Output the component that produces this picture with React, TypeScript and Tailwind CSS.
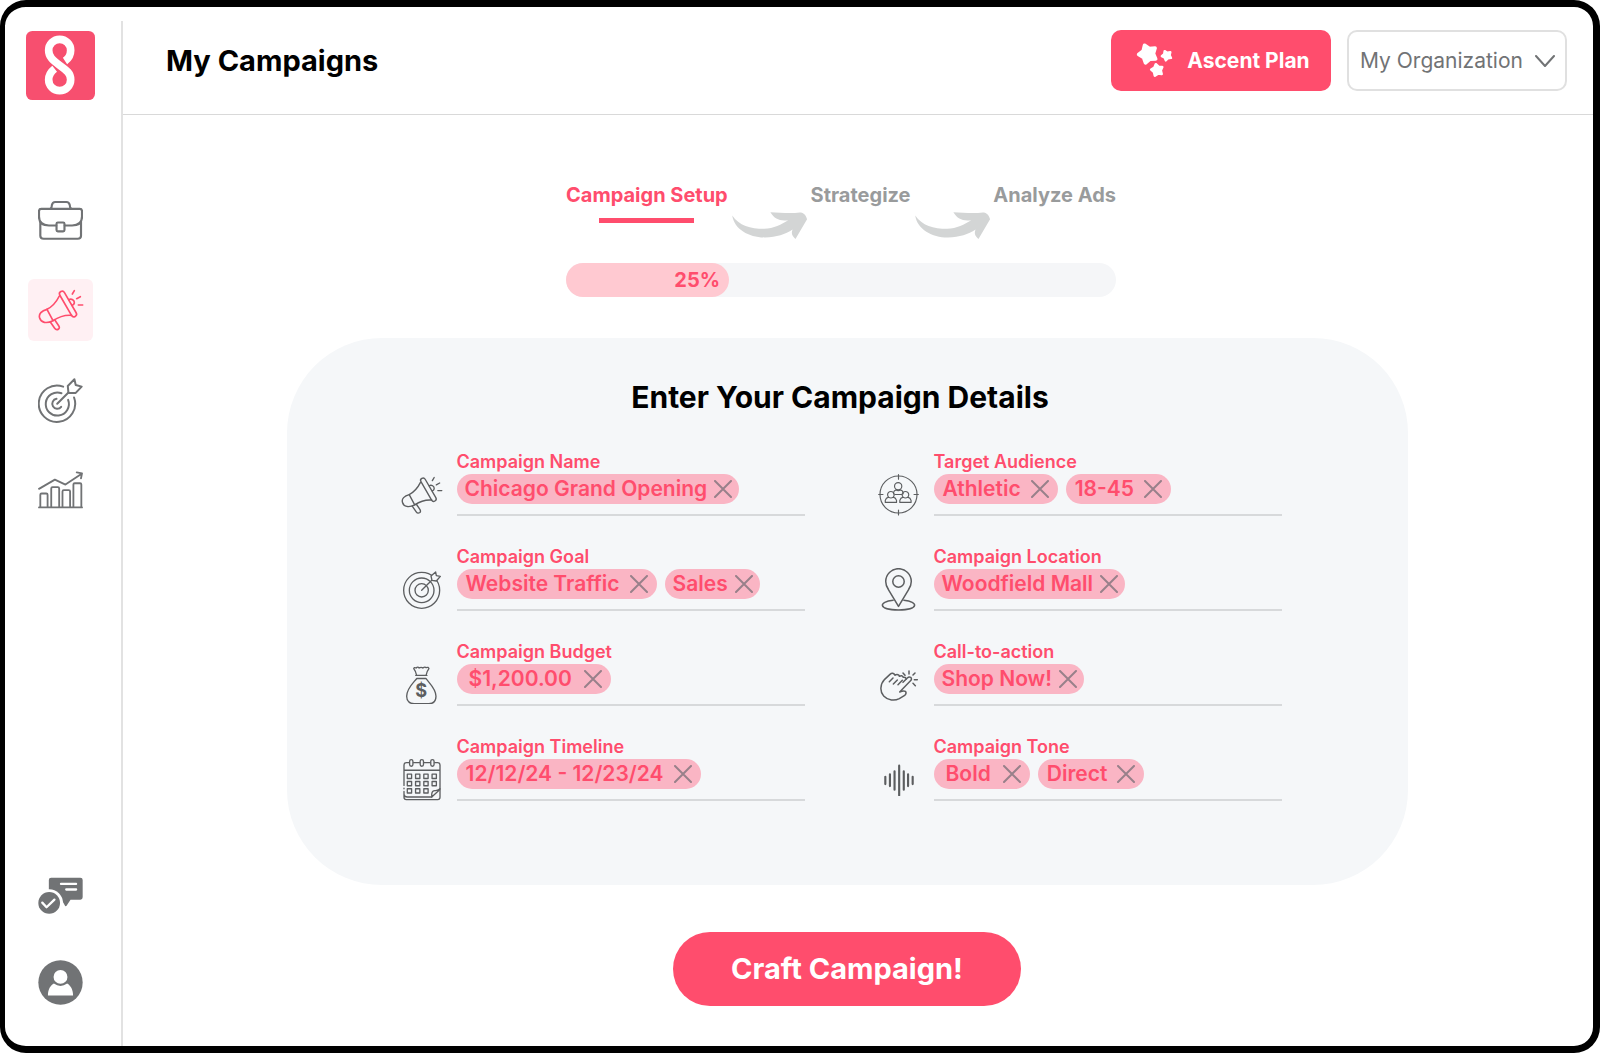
import { useState } from "react";

const PINK = "#ff4d6d";
const GRAY = "#717375";
const DARK = "#5c5e60";

const star = (cx: number, cy: number, r: number, rot: number) =>
  Array.from({ length: 10 }, (_, i) => {
    const a = ((rot + i * 36) * Math.PI) / 180;
    const len = i % 2 === 0 ? r : r * 0.6;
    return `${(cx + len * Math.cos(a)).toFixed(1)},${(cy + len * Math.sin(a)).toFixed(1)}`;
  }).join(" ");

const line = (color: string, width: number) => ({
  fill: "none",
  stroke: color,
  strokeWidth: width,
  strokeLinecap: "round" as const,
  strokeLinejoin: "round" as const,
});

const Logo = () => (
  <svg viewBox="79 93 207 207" className="size-[69px]" aria-hidden="true">
    <rect x="79" y="93" width="207" height="207" rx="19" fill="#f74f6f" />
    <path
      d="M196 183C208 175 213 165 213 151A33 33 0 0 0 147 151C147 170 158 180 180 196C202 212 213 220 213 239A33 33 0 0 1 147 239C147 225 152 216 165 206"
      fill="none"
      stroke="#fff"
      strokeWidth="23"
    />
  </svg>
);

const Briefcase = () => (
  <svg viewBox="114 600 136 122" className="w-[45px]" aria-hidden="true" {...line(GRAY, 6.5)}>
    <path d="M169 677H147Q117 677 117 650V634Q117 627 124 627H240Q247 627 247 634V650Q247 677 217 677H195" />
    <path d="M121 666V708Q121 717 131 717H234Q244 717 244 708V666" />
    <rect x="170" y="668" width="24" height="27" rx="4" />
    <path d="M152 626Q156 623 156 615Q158 606 166 606H200Q208 606 210 615Q210 623 214 626" />
  </svg>
);

const Megaphone = ({ color, width, className }: { color: string; width: number; className: string }) => (
  <svg viewBox="113 85 138 126" className={className} aria-hidden="true" {...line(color, width)}>
    <rect x="-43" y="-8" width="86" height="16" rx="8" transform="translate(203 130) rotate(60)" />
    <path d="M177 106C168 124 156 138 140 146L158 180C176 168 192 162 214 164" />
    <path d="M140 146C124 150 114 160 118 172C122 186 138 190 158 180" />
    <path d="M150 184L163 203Q168 210 175 205Q179 201 175 195L163 177" />
    <path d="M206 117C213 112 223 119 222 127Q221 132 216 134" />
    <path d="M216 100L222 90M229 114L240 108M234 133H247" />
  </svg>
);

const TargetOpen = () => (
  <svg viewBox="114 354 136 136" className="w-[45px]" aria-hidden="true" {...line(GRAY, 6)}>
    <path d="M190 380A55 55 0 1 0 223 413" />
    <path d="M185 400A35 35 0 1 0 205 420" />
    <path d="M170 417A15 15 0 1 0 184 441" />
    <path d="M172 432L206 398" />
    <path d="M206 399L204 378L224 358L228 375L246 380L228 399Z" />
  </svg>
);

const Growth = () => (
  <svg viewBox="114 634 136 115" className="w-[45px]" aria-hidden="true" {...line(GRAY, 5.5)}>
    <path d="M117 744H247M117 688L165 660L197 675L246 642M231 638L247 641L244 656" />
    <path d="M121 743V706Q121 702 125 702H139Q143 702 143 706V743M154 743V687Q154 683 158 683H174Q178 683 178 687V743M188 743V696Q188 692 192 692H207Q211 692 211 696V743M221 743V675Q221 671 225 671H241Q245 671 245 675V743" />
  </svg>
);

const ChatCheck = () => (
  <svg viewBox="114 111 137 114" className="w-[45px]" aria-hidden="true">
    <path d="M154 113H243Q250 113 250 120V173Q250 180 243 180H213L202 197Q198 203 195 196L186 180H147V120Q147 113 154 113Z" fill={GRAY} />
    <circle cx="148" cy="190" r="42" fill="#fff" />
    <circle cx="148" cy="190" r="33" fill={GRAY} />
    <path d="M127 189L140 203L164 180M184 132H230M200 149H230" {...line("#fff", 7)} />
  </svg>
);

const User = () => (
  <svg viewBox="114 357 136 136" className="w-[45px]" aria-hidden="true">
    <circle cx="182" cy="425" r="67" fill={GRAY} />
    <circle cx="182" cy="408" r="21" fill="#fff" />
    <path d="M144 464C144 446 152 433 162 428Q182 443 202 428C213 434 220 447 220 464Z" fill="#fff" />
  </svg>
);

const Stars = () => (
  <svg viewBox="170 132 112 106" className="w-[37px]" aria-hidden="true" fill="#fff" stroke="#fff" strokeLinejoin="round">
    <polygon points={star(206, 165, 28, -111)} strokeWidth="11" />
    <polygon points={star(263, 170, 15, -115)} strokeWidth="7" />
    <polygon points={star(234, 214, 18, -103)} strokeWidth="8" />
  </svg>
);

const Target = () => (
  <svg viewBox="68 425 114 115" className="w-[38px]" aria-hidden="true" {...line(DARK, 4)}>
    <circle cx="124" cy="483" r="54" />
    <circle cx="124" cy="483" r="37" />
    <circle cx="124" cy="483" r="20" />
    <path d="M124 483L155 452" />
    <path d="M155 453L152 440L166 428L168 439L180 441L168 455Z" fill="#f5f7f9" />
  </svg>
);

const MoneyBag = () => (
  <svg viewBox="80 110 92 115" className="w-[31px]" aria-hidden="true" {...line(DARK, 4)}>
    <path d="M112 147C100 162 82 177 82 200C82 215 92 222 104 222H148C160 222 169 215 169 200C169 177 150 162 139 147Z" />
    <path d="M109 138H142M111 136Q109 126 103 118Q104 113 110 116Q115 111 119 116Q125 112 130 116Q136 111 140 115Q147 112 148 118Q142 126 140 136" />
    <text x="125" y="203" textAnchor="middle" fontSize="54" fontWeight="700" fill={DARK} stroke="none">
      $
    </text>
  </svg>
);

const Calendar = () => (
  <svg viewBox="61 382 115 126" className="w-[38px]" aria-hidden="true" {...line(DARK, 4)}>
    <path d="M79 393H71Q64 393 64 400V462M64 470V472M64 480V498Q64 505 71 505H166Q173 505 173 498V400Q173 393 166 393H157M93 393H111M125 393H143M64 416H173M64 489Q65 497 74 497H148" />
    {[86, 118, 150].map((x) => (
      <rect key={x} x={x - 5} y="384" width="10" height="20" rx="5" />
    ))}
    {[428, 450, 472].map((y) =>
      [74, 99, 124, 149].map((x) => (y === 472 && x === 149 ? null : <rect key={x + y} x={x} y={y} width="13" height="13" />))
    )}
    <path d="M148 497V488Q149 476 160 478Q170 476 173 472M148 497L172 475" />
  </svg>
);

const Audience = () => (
  <svg viewBox="59 130 124 125" className="w-[41px]" aria-hidden="true" {...line(DARK, 3.5)}>
    <circle cx="121" cy="192" r="56" />
    <path d="M121 132V146M121 239V254M61 192H74M168 192H181" />
    <circle cx="120" cy="167" r="11" />
    <path d="M106 190V186Q107 180 114 178Q120 183 127 178Q134 180 135 186V190M110 192H131" />
    {[98, 142].map((x) => (
      <g key={x} transform={`translate(${x} 0)`}>
        <path d="M-7 200A10 10 0 1 1 7 200Q15 202 17 210V216H-17V210Q-15 202 -7 200Q0 205 7 200" />
      </g>
    ))}
  </svg>
);

const Pin = () => (
  <svg viewBox="68 418 104 128" className="w-[35px]" aria-hidden="true" {...line(DARK, 4.5)}>
    <path d="M120 532L90 482Q82 470 82 458A38 38 0 0 1 158 458Q158 470 150 482Z" />
    <circle cx="120" cy="458" r="17" />
    <path d="M104 514C60 518 58 542 120 543C182 542 180 518 136 514" />
  </svg>
);

const Tap = () => (
  <svg viewBox="64 124 114 93" className="w-[38px]" aria-hidden="true" {...line(DARK, 4.5)}>
    <path d="M92 159L103 148M109 139Q102 130 94 137L78 152C64 167 63 189 75 202C88 216 108 217 122 210L138 200Q145 194 140 188Q135 185 123 190L157 155Q160 150 156 146Q151 143 146 148L133 161" />
    <path d="M109 139Q116 135 121 140L122 143M104 166L116 154M122 143Q130 138 134 146M118 168L131 155M134 146Q141 145 143 151" />
    <path d="M151 127V136M133 133L139 140M169 133L163 139M167 153H176M163 164L170 171" />
  </svg>
);

const Wave = () => (
  <svg viewBox="75 395 91 100" className="w-[30px]" aria-hidden="true" {...line(DARK, 6.5)}>
    <path d="M79 434V456M93 426V462M107 417V473M121 400V490M135 417V473M148 426V462M162 434V456" />
  </svg>
);

const Arrow = () => (
  <svg viewBox="188 52 79 29" className="mt-[29px] h-7 min-w-0 flex-1" aria-hidden="true">
    <path
      d="M189 55.5C191 70 207 78.5 223 78.3C235 78 244 75 251.5 70C250 74 250.5 76 254.5 80L266.5 59.5C265 54 262 52.5 259 52.5C249 54 238 52.5 228.5 52.3C233 59.5 238 61.5 247 60.5C240 65 232 69 222 69.3C208 69.3 196 66 189 55.5Z"
      fill="#d3d5d5"
    />
  </svg>
);

const navItems = [
  { name: "Portfolio", icon: <Briefcase /> },
  { name: "Campaigns", icon: <Megaphone color={PINK} width={5} className="w-[46px]" />, active: true },
  { name: "Targeting", icon: <TargetOpen /> },
  { name: "Analytics", icon: <Growth /> },
];

const accountItems = [
  { name: "Messages", icon: <ChatCheck /> },
  { name: "Profile", icon: <User /> },
];

const compact = "gap-[7px] pl-2 pr-[7px]";
const normal = "gap-[10px] px-[9px]";
const roomy = "gap-3 pl-3 pr-[9px]";

const fields = [
  {
    id: "name",
    label: "Campaign Name",
    icon: <Megaphone color={DARK} width={4.5} className="w-[42px]" />,
    tags: [{ text: "Chicago Grand Opening", space: compact }],
  },
  {
    id: "audience",
    label: "Target Audience",
    icon: <Audience />,
    tags: [
      { text: "Athletic", space: normal },
      { text: "18-45", space: normal },
    ],
  },
  {
    id: "goal",
    label: "Campaign Goal",
    icon: <Target />,
    tags: [
      { text: "Website Traffic", space: normal },
      { text: "Sales", space: compact },
    ],
  },
  { id: "location", label: "Campaign Location", icon: <Pin />, tags: [{ text: "Woodfield Mall", space: compact }] },
  { id: "budget", label: "Campaign Budget", icon: <MoneyBag />, tags: [{ text: "$1,200.00", space: roomy }] },
  { id: "cta", label: "Call-to-action", icon: <Tap />, tags: [{ text: "Shop Now!", space: compact }] },
  { id: "timeline", label: "Campaign Timeline", icon: <Calendar />, tags: [{ text: "12/12/24 - 12/23/24", space: normal }] },
  {
    id: "tone",
    label: "Campaign Tone",
    icon: <Wave />,
    tags: [
      { text: "Bold", space: roomy },
      { text: "Direct", space: normal },
    ],
  },
];

const NavButton = ({ item }: { item: any }) => (
  <button
    type="button"
    aria-label={item.name}
    className={`flex h-[62px] w-[65px] cursor-pointer items-center justify-center rounded-md ${
      item.active ? "bg-[#fff0f3]" : ""
    }`}
  >
    {item.icon}
  </button>
);

const Field = ({ field }: { field: any }) => {
  const [tags, setTags] = useState<any[]>(field.tags);

  return (
    <div className="flex gap-3">
      <div className="mt-6 flex h-[42px] w-[46px] shrink-0 items-center justify-center">{field.icon}</div>
      <div className="min-w-0 flex-1 border-b-2 border-[#d7d9db] pb-[10px]">
        <label htmlFor={field.id} className="block text-[18px] leading-6 font-semibold text-[#ff4d6d]">
          {field.label}
        </label>
        <div className="flex gap-2">
          {tags.map((tag) => (
            <span
              key={tag.text}
              className={`flex h-[30px] shrink-0 items-center rounded-full bg-[#fab5c4] text-[21px] leading-[30px] font-semibold text-[#ff4d6d] ${tag.space}`}
            >
              {tag.text}
              <button
                type="button"
                aria-label={`Remove ${tag.text}`}
                className="cursor-pointer"
                onClick={() => setTags(tags.filter((t) => t !== tag))}
              >
                <svg viewBox="0 0 18 18" className="size-[18px]" {...line("#98808a", 2)}>
                  <path d="M1 1L17 17M17 1L1 17" />
                </svg>
              </button>
            </span>
          ))}
          <input id={field.id} type="text" className="w-0 min-w-0 flex-1 bg-transparent outline-none" />
        </div>
      </div>
    </div>
  );
};

const App = () => {
  const progress = 25;

  return (
    <div className="flex min-h-screen rounded-[26px] border-y-[7px] border-r-[7px] border-l-[5px] border-black bg-white font-['Inter',sans-serif] text-black">
      <aside className="flex w-[116px] shrink-0 flex-col items-center pt-6 pr-[5px] pb-[33px]">
        <Logo />
        <nav className="mt-[89px] flex flex-1 flex-col gap-7">
          {navItems.map((item) => (
            <NavButton key={item.name} item={item} />
          ))}
        </nav>
        <div className="flex flex-col gap-6">
          {accountItems.map((item) => (
            <NavButton key={item.name} item={item} />
          ))}
        </div>
      </aside>
      <div className="mt-[14px] w-[2px] shrink-0 bg-[#e2e2e2]" />

      <div className="flex min-w-0 flex-1 flex-col">
        <header className="flex h-[108px] items-center border-b border-[#d9d9d9] pr-[26px] pl-[43px]">
          <h1 className="flex-1 text-[29px] leading-9 font-bold">My Campaigns</h1>
          <button
            type="button"
            className="flex h-[61px] w-[220px] cursor-pointer items-center justify-center gap-[14px] rounded-[10px] bg-[#ff4d6d] pl-1 text-[21px] leading-6 font-bold text-white"
          >
            <Stars />
            Ascent Plan
          </button>
          <div className="relative ml-4">
            <select
              aria-label="Organization"
              className="h-[61px] w-[220px] cursor-pointer appearance-none rounded-[10px] border-2 border-[#e0e0e0] bg-white pl-[11px] text-[21px] text-[#717375]"
            >
              <option>My Organization</option>
            </select>
            <svg
              viewBox="0 0 20 12"
              className="pointer-events-none absolute top-[25px] right-3 w-5"
              {...line("#717375", 2)}
            >
              <path d="M1 1L10 11L19 1" />
            </svg>
          </div>
        </header>

        <main className="flex flex-1 flex-col items-center pt-[68px] pr-[22px] pb-10">
          <div className="w-full max-w-[562px] pr-3">
            <ol className="flex items-start text-[20px] leading-6 font-bold text-[#999b9c]">
              <li className="text-[#ff4d6d]">
                Campaign Setup
                <div className="mx-auto mt-[11px] h-[5px] w-[95px] bg-[#ff4d6d]" />
              </li>
              <Arrow />
              <li>Strategize</li>
              <Arrow />
              <li>Analyze Ads</li>
            </ol>
            <div className="mt-[23px] h-[34px] rounded-full bg-[#f5f6f8]">
              <div
                className="flex h-full min-w-[163px] items-center justify-end rounded-full bg-[#ffc9d1] pr-[9px] text-[20px] font-bold text-[#ff4d6d]"
                style={{ width: `${progress}%` }}
              >
                {progress}%
              </div>
            </div>
          </div>

          <form className="mt-[41px] w-full max-w-[1121px] rounded-[95px] bg-[#f5f7f9] pt-[41px] pr-[14px] pb-[84px]">
            <h2 className="text-center text-[30px] leading-9 font-bold">Enter Your Campaign Details</h2>
            <div className="mx-auto mt-[35px] grid max-w-[883px] grid-cols-2 gap-x-[71px] gap-y-[29px]">
              {fields.map((field) => (
                <Field key={field.id} field={field} />
              ))}
            </div>
          </form>

          <button
            type="button"
            className="mt-[47px] h-[74px] w-[348px] cursor-pointer rounded-full bg-[#ff4d6d] text-[29px] font-bold text-white"
          >
            Craft Campaign!
          </button>
        </main>
      </div>
    </div>
  );
};

export default App;
